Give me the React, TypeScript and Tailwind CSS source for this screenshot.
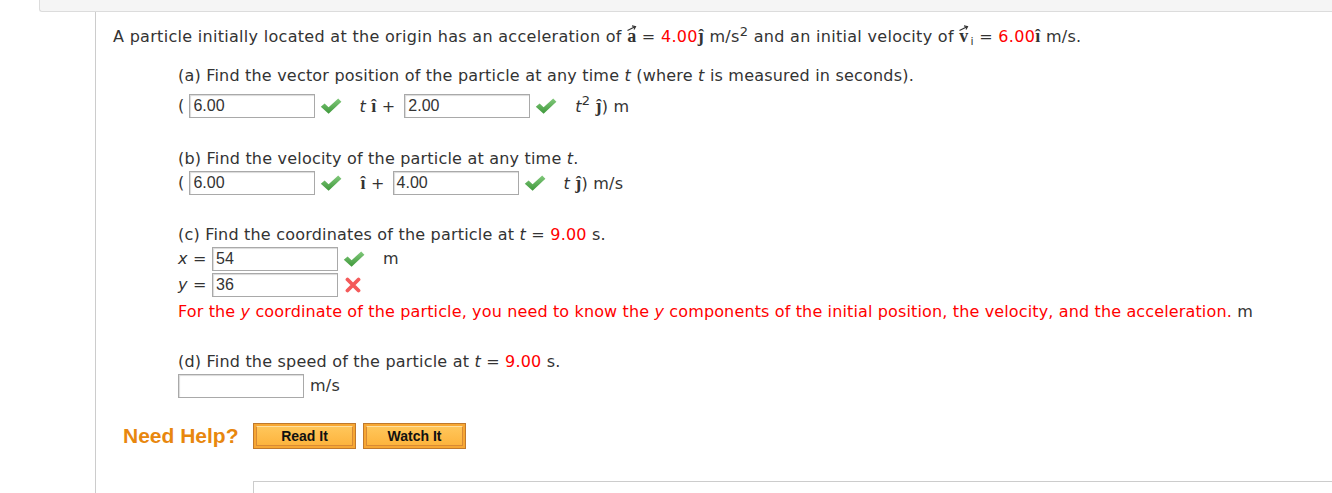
import React from "react"

const font = { fontFamily: '"DejaVu Sans", Verdana, sans-serif', letterSpacing: "0.2px" }

function Check() {
  return (
    <svg width="22" height="18" viewBox="0 0 22 18" className="mx-[5px] shrink-0">
      <defs>
        <linearGradient id="g" x1="0" y1="0" x2="0" y2="1">
          <stop offset="0" stopColor="#82c97c" />
          <stop offset="1" stopColor="#3e983a" />
        </linearGradient>
      </defs>
      <path d="M0.8 9.8 L4.6 6.6 L8.6 10.2 L18.2 1.4 L21.4 4.8 L8.6 16.8 Z" fill="url(#g)" />
    </svg>
  )
}

function Cross() {
  return (
    <svg width="16" height="16" viewBox="0 0 16 16" className="mx-[7px] shrink-0">
      <path d="M2.5 2.5 L13.5 13.5 M13.5 2.5 L2.5 13.5" stroke="#f45a5a" strokeWidth="3.8" strokeLinecap="round" />
    </svg>
  )
}

function Box({ value, w = 126 }: { value: string; w?: number }) {
  return (
    <div
      className="h-[24px] shrink-0 border border-[#a9a9a9] bg-white px-[3px] text-[16px] leading-[22px] tracking-normal text-[#333] shadow-[inset_1px_1px_1px_rgba(0,0,0,0.15)]"
      style={{ width: w, fontFamily: '"Liberation Sans", Arial, sans-serif' }}
    >
      {value}
    </div>
  )
}

function Unit({ c }: { c: string }) {
  return (
    <b className="text-[18px] font-bold" style={{ fontFamily: '"Liberation Serif", "Times New Roman", serif' }}>
      {c}
    </b>
  )
}

function Vec({ c, sub }: { c: string; sub?: string }) {
  return (
    <span className="relative inline-block">
      <b className="text-[18px]" style={{ fontFamily: '"Liberation Serif", "Times New Roman", serif' }}>
        {c}
      </b>
      <svg width="10" height="7" viewBox="0 0 10 7" className="absolute left-[0px] top-[-1px]">
        <path d="M0.5 5.5 L8 1.8 M5 0.8 L8.5 1.7 L7 4.5" stroke="#333" strokeWidth="1.2" fill="none" />
      </svg>
      {sub && <sub className="ml-[2px] text-[11px]">{sub}</sub>}
    </span>
  )
}

function HelpButton({ label, w }: { label: string; w: number }) {
  return (
    <div className="h-[26px] border border-[#c0792c] bg-[#f7a733] p-[2px]" style={{ width: w }}>
      <div
        className="h-full border border-[#d88a35] border-t-[#ffe0a0] bg-gradient-to-b from-[#ffc65a] to-[#fdb43d] text-center text-[14px] font-bold leading-[18px] tracking-normal text-[#111]"
        style={{ fontFamily: '"Liberation Sans", Arial, sans-serif' }}
      >
        {label}
      </div>
    </div>
  )
}

export default function App() {
  return (
    <div className="h-[493px] w-[1332px] overflow-hidden bg-white text-[16px] text-[#333]" style={font}>
      {/* top strip */}
      <div className="ml-[39px] h-[12px] rounded-bl-[3px] border-b border-l border-[#dcdcdc] bg-[#f5f5f5]" />

      <div className="ml-[95px] h-[481px] border-l border-[#cccccc] pl-[17px] pt-[14px]">
        <p className="whitespace-nowrap leading-[20px] tracking-[0.3px]">
          A particle initially located at the origin has an acceleration of <Vec c="a" /> ={" "}
          <span className="text-[#ff0000]">4.00</span>
          <Unit c="ĵ" /> m/s<sup className="text-[13px]">2</sup> and an initial velocity of <Vec c="v" sub="i" />{" "}
          = <span className="text-[#ff0000]">6.00</span>
          <Unit c="î" /> m/s.
        </p>

        <div className="ml-[65px]">
          {/* (a) */}
          <p className="mt-[19px] leading-[20px]">
            (a) Find the vector position of the particle at any time <i>t</i> (where <i>t</i> is measured in seconds).
          </p>
          <div className="mt-[8px] flex h-[24px] items-center">
            <span className="mr-[5px]">(</span>
            <Box value="6.00" />
            <Check />
            <span className="ml-[12px] mr-[9px] whitespace-nowrap">
              <i>t</i> <Unit c="î" /> +
            </span>
            <Box value="2.00" />
            <Check />
            <span className="ml-[13px] whitespace-nowrap">
              <i>t</i>
              <sup className="text-[13px]">2</sup> <Unit c="ĵ" />) m
            </span>
          </div>

          {/* (b) */}
          <p className="mt-[31px] leading-[20px]">
            (b) Find the velocity of the particle at any time <i>t</i>.
          </p>
          <div className="mt-[2px] flex h-[24px] items-center">
            <span className="mr-[5px]">(</span>
            <Box value="6.00" />
            <Check />
            <span className="ml-[13px] mr-[8px] whitespace-nowrap">
              <Unit c="î" /> +
            </span>
            <Box value="4.00" />
            <Check />
            <span className="ml-[13px] whitespace-nowrap">
              <i>t</i> <Unit c="ĵ" />) m/s
            </span>
          </div>

          {/* (c) */}
          <p className="mt-[30px] leading-[20px]">
            (c) Find the coordinates of the particle at <i>t</i> = <span className="text-[#ff0000]">9.00</span> s.
          </p>
          <div className="mt-[2px] flex h-[24px] items-center">
            <span className="w-[34px]">
              <i>x</i> =
            </span>
            <Box value="54" />
            <Check />
            <span className="ml-[13px]">m</span>
          </div>
          <div className="mt-[2px] flex h-[24px] items-center">
            <span className="w-[34px]">
              <i>y</i> =
            </span>
            <Box value="36" />
            <Cross />
          </div>
          <p className="mt-[5px] whitespace-nowrap leading-[20px] tracking-[0.14px]">
            <span className="text-[#ff0000]">
              For the <i>y</i> coordinate of the particle, you need to know the <i>y</i> components of the initial
              position, the velocity, and the acceleration.
            </span>{" "}
            m
          </p>

          {/* (d) */}
          <p className="mt-[30px] leading-[20px]">
            (d) Find the speed of the particle at <i>t</i> = <span className="text-[#ff0000]">9.00</span> s.
          </p>
          <div className="mt-[2px] flex h-[24px] items-center">
            <Box value="" />
            <span className="ml-[6px]">m/s</span>
          </div>
        </div>

        {/* help */}
        <div className="ml-[10px] mt-[22px] flex items-center">
          <span
            className="w-[130px] text-[21px] font-bold tracking-normal text-[#e8870e]"
            style={{ fontFamily: '"Liberation Sans", Arial, sans-serif' }}
          >
            Need Help?
          </span>
          <HelpButton label="Read It" w={103} />
          <div className="w-[7px]" />
          <HelpButton label="Watch It" w={103} />
        </div>

        <div className="ml-[140px] mt-[29px] h-[20px] border-l border-t border-[#cccccc]" />
      </div>
    </div>
  )
}
